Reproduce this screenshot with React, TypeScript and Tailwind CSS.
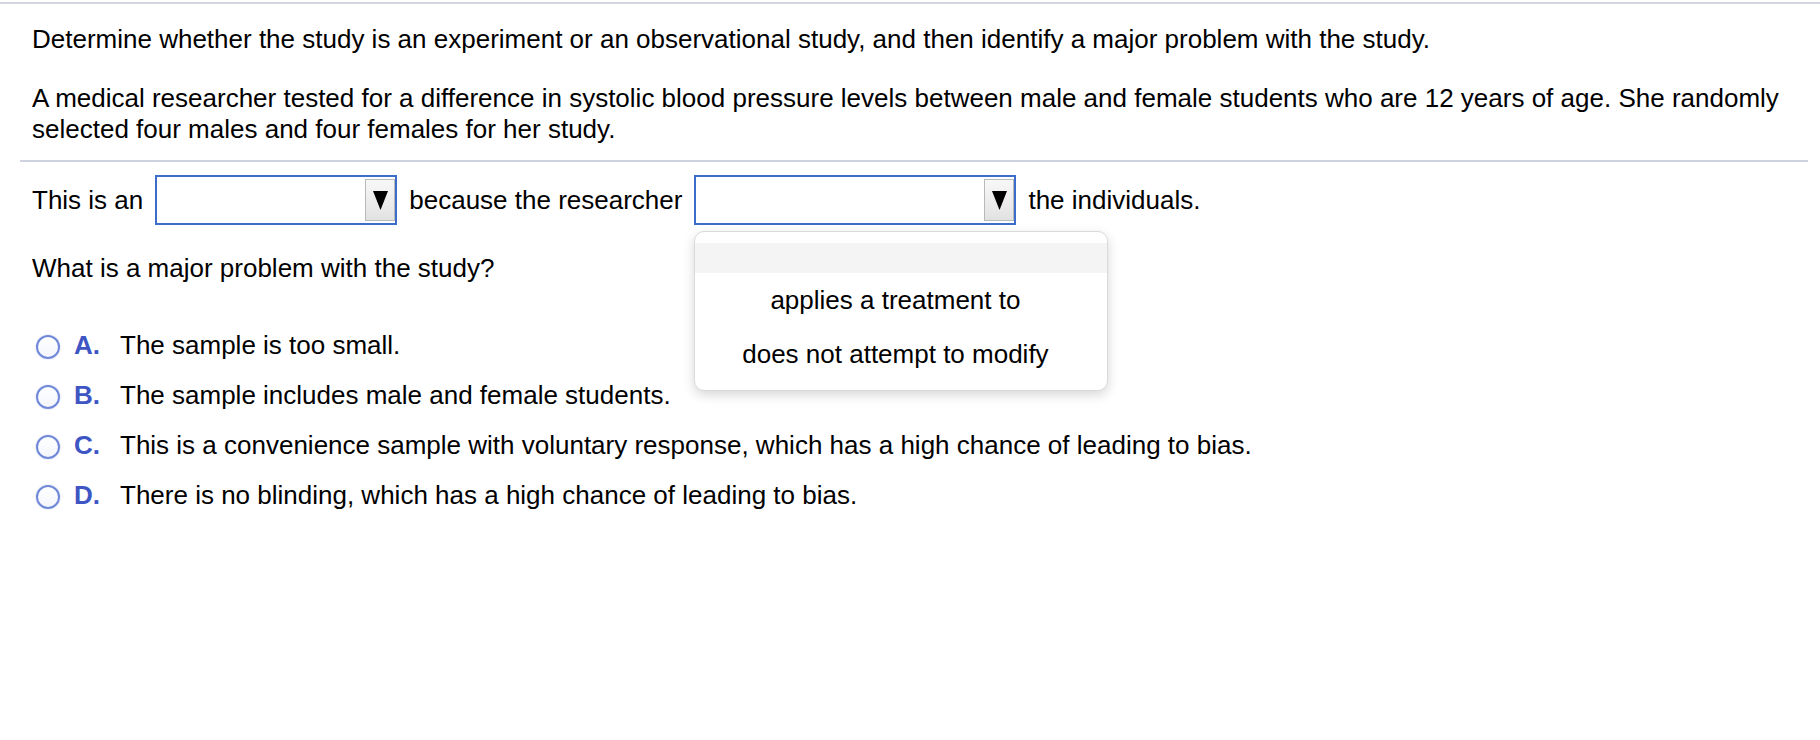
import React from "react";

function Arrow() {
  return (
    <div className="flex h-full w-[30px] items-center justify-center border border-[#b9b9b9] bg-gradient-to-b from-[#f8f8f8] to-[#e2e2e2]">
      <svg width="15" height="19" viewBox="0 0 15 19">
        <polygon points="0,0 15,0 7.5,19" fill="#000" />
      </svg>
    </div>
  );
}

function Select({ width, children }: { width: string; children?: React.ReactNode }) {
  return (
    <div className="relative">
      <div className={`flex h-[50px] ${width} justify-end border-2 border-[#3c6dcb] bg-white py-[2px]`}>
        <Arrow />
      </div>
      {children}
    </div>
  );
}

function Option({ letter, text }: { letter: string; text: string }) {
  return (
    <div className="flex h-[50px] items-center">
      <div className="mt-[4px] h-[24px] w-[24px] rounded-full border-[2.5px] border-[#7088d8] bg-gradient-to-b from-white to-[#f3f5fb] shadow-[0_0_2px_rgba(90,110,200,0.35)]" />
      <span className="ml-[14px] w-[46px] font-bold text-[#3e56c3]">{letter}</span>
      <span>{text}</span>
    </div>
  );
}

export default function App() {
  return (
    <div className="min-h-screen bg-white font-['Liberation_Sans',Arial,sans-serif] text-[26px] leading-[30px] text-black">
      <div className="mt-[2px] border-t-2 border-[#d3d6de]">
        <div className="pl-[20px] pr-[12px]">
          <div className="pb-[15px] pl-[12px] pt-[20px]">
            <p>
              Determine whether the study is an experiment or an observational study, and then identify a major
              problem with the study.
            </p>
            <p className="mt-[29px] pr-[20px] leading-[31px]">
              A medical researcher tested for a difference in systolic blood pressure levels between male and female
              students who are 12 years of age. She randomly selected four males and four females for her study.
            </p>
          </div>
          <div className="border-t-2 border-[#cfd3e0]" />
          <div className="pl-[12px] pt-[13px]">
            <div className="flex items-center gap-[12px]">
              <span>This is an</span>
              <Select width="w-[242px]" />
              <span>because the researcher</span>
              <Select width="w-[322px]">
                <div className="absolute left-0 top-[56px] z-10 w-[414px] rounded-[10px] border border-[#dadada] bg-white pb-[9px] pt-[11px] shadow-[0_4px_12px_rgba(0,0,0,0.16)]">
                  <div className="h-[30px] bg-[#f4f4f4]" />
                  <div className="h-[54px] pr-[12px] text-center leading-[54px]">applies a treatment to</div>
                  <div className="h-[54px] pr-[12px] text-center leading-[54px]">does not attempt to modify</div>
                </div>
              </Select>
              <span>the individuals.</span>
            </div>
            <p className="mt-[28px]">What is a major problem with the study?</p>
            <div className="ml-[4px] mt-[37px] flex flex-col">
              <Option letter="A." text="The sample is too small." />
              <Option letter="B." text="The sample includes male and female students." />
              <Option
                letter="C."
                text="This is a convenience sample with voluntary response, which has a high chance of leading to bias."
              />
              <Option letter="D." text="There is no blinding, which has a high chance of leading to bias." />
            </div>
          </div>
        </div>
      </div>
    </div>
  );
}
